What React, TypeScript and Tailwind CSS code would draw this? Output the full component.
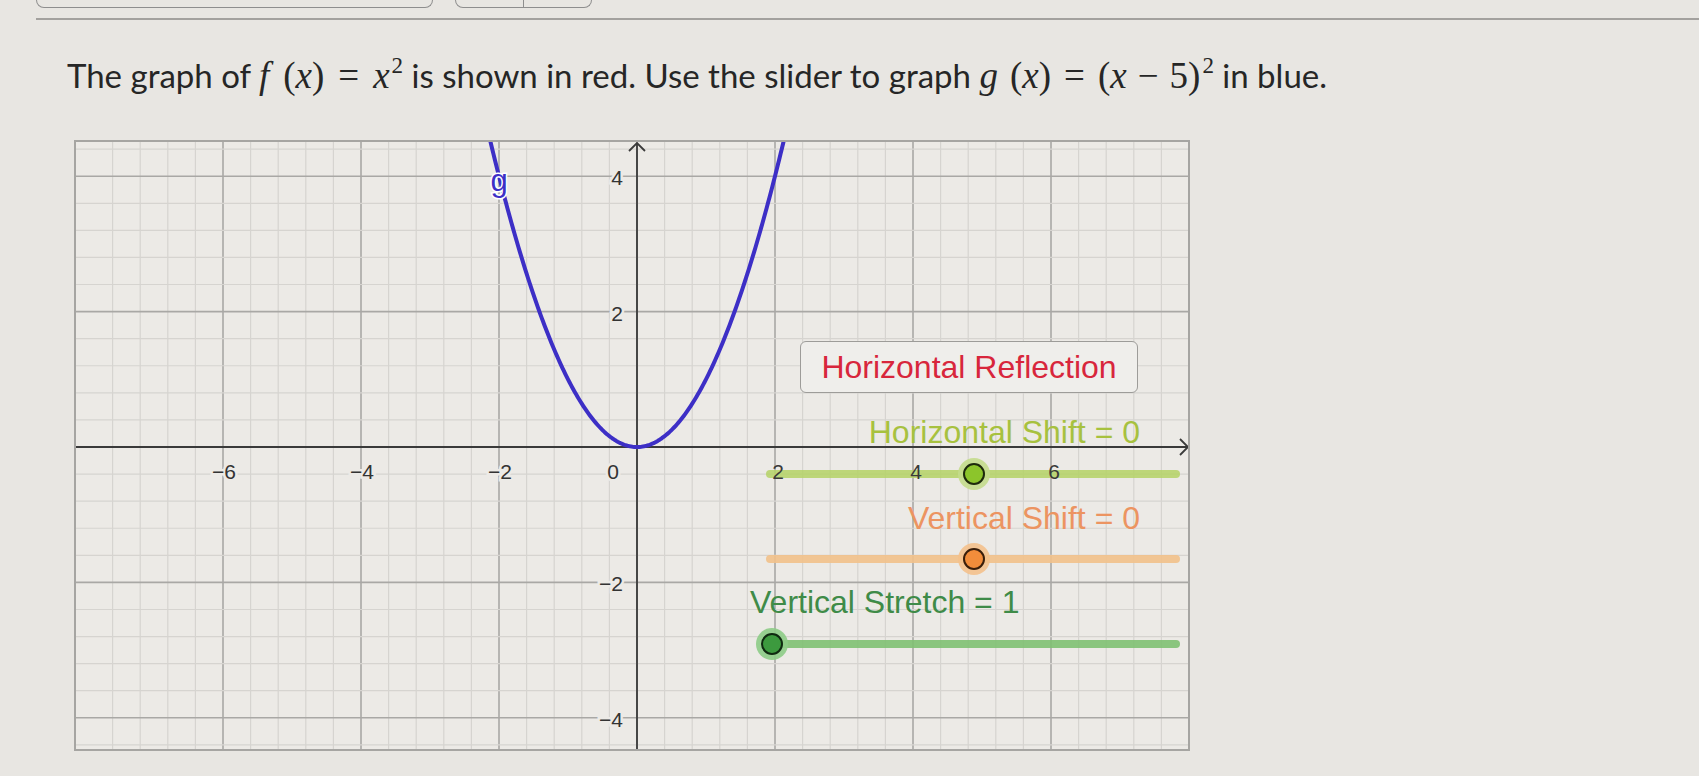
import React from "react";

const W = 1116;
const H = 611;
const X = (x: number) => 563 + 69 * x;
const Y = (y: number) => 307 - 67.7 * y;

const SANS = "'Liberation Sans', Arial, sans-serif";

function Graph() {
  const vlines: React.ReactNode[] = [];
  for (let i = -20; i <= 20; i++) {
    const major = i % 5 === 0;
    const x = X(i * 0.4);
    if (x < 14 || x > W - 4) continue;
    vlines.push(
      <line
        key={"v" + i}
        x1={x}
        y1={0}
        x2={x}
        y2={H}
        stroke={major ? "#a9a8a5" : "#d6d4d0"}
        strokeWidth={major ? 1.6 : 1.2}
      />
    );
  }
  const hlines: React.ReactNode[] = [];
  for (let i = -12; i <= 12; i++) {
    const major = i % 5 === 0;
    const y = Y(i * 0.4);
    if (y < 4 || y > H - 4) continue;
    hlines.push(
      <line
        key={"h" + i}
        x1={0}
        y1={y}
        x2={W}
        y2={y}
        stroke={major ? "#a9a8a5" : "#d6d4d0"}
        strokeWidth={major ? 1.6 : 1.2}
      />
    );
  }
  const pts: string[] = [];
  for (let k = 0; k <= 220; k++) {
    const x = -2.2 + (4.4 * k) / 220;
    pts.push(`${k === 0 ? "M" : "L"}${X(x).toFixed(2)},${Y(x * x).toFixed(2)}`);
  }
  const curve = pts.join(" ");
  const lab = {
    fontFamily: SANS,
    fontSize: 21,
    fill: "#333",
    stroke: "#eceae6",
    strokeWidth: 5,
    paintOrder: "stroke" as const,
  };
  const labPlain = { fontFamily: SANS, fontSize: 21, fill: "#3a3a3a" };
  const xlNeg = [-6, -4, -2];
  const xlPos = [2, 4, 6];
  const yl = [4, 2, -2, -4];
  return (
    <svg width={W} height={H} viewBox={`0 0 ${W} ${H}`} className="block">
      <defs>
        <clipPath id="gc">
          <rect x={0} y={0} width={W} height={H} />
        </clipPath>
      </defs>
      <rect x={0} y={0} width={W} height={H} fill="#eceae6" />
      {vlines}
      {hlines}
      {/* axes */}
      <line x1={0} y1={Y(0)} x2={W - 2} y2={Y(0)} stroke="#3a3a3a" strokeWidth={1.8} />
      <line x1={X(0)} y1={H} x2={X(0)} y2={3} stroke="#3a3a3a" strokeWidth={1.8} />
      <path d={`M${X(0) - 8},${11} L${X(0)},${3} L${X(0) + 8},${11}`} fill="none" stroke="#3a3a3a" strokeWidth={1.8} />
      <path d={`M${W - 10},${Y(0) - 8} L${W - 2},${Y(0)} L${W - 10},${Y(0) + 8}`} fill="none" stroke="#3a3a3a" strokeWidth={1.8} />
      {/* labels */}
      {xlNeg.map((v) => (
        <text key={"xl" + v} x={X(v) + 1} y={Y(0) + 32} textAnchor="middle" style={lab}>
          {"\u2212" + Math.abs(v)}
        </text>
      ))}
      <text x={X(0) - 24} y={Y(0) + 32} textAnchor="middle" style={lab}>
        0
      </text>
      {yl.map((v) => (
        <text key={"yl" + v} x={X(0) - 14} y={Y(v) + 9} textAnchor="end" style={lab}>
          {v < 0 ? "\u2212" + Math.abs(v) : String(v)}
        </text>
      ))}
      {/* curves */}
      <g clipPath="url(#gc)">
        <path d={curve} fill="none" stroke="#d63a3a" strokeWidth={2} />
        <path d={curve} fill="none" stroke="#3d2fc6" strokeWidth={4} strokeLinejoin="round" />
      </g>
      <text
        x={425}
        y={51}
        textAnchor="middle"
        style={{
          fontFamily: SANS,
          fontSize: 31,
          fill: "#3d2fc6",
          stroke: "#ffffff",
          strokeWidth: 3,
          paintOrder: "stroke",
        }}
      >
        g
      </text>
      {/* slider tracks */}
      <line x1={696} y1={334} x2={1102} y2={334} stroke="#b5d366" strokeWidth={8} strokeLinecap="round" opacity={0.85} />
      <line x1={696} y1={419} x2={1102} y2={419} stroke="#f2c28b" strokeWidth={8} strokeLinecap="round" opacity={0.9} />
      <line x1={696} y1={504} x2={1102} y2={504} stroke="#80c173" strokeWidth={8} strokeLinecap="round" opacity={0.9} />
      {xlPos.map((v) => (
        <text key={"xp" + v} x={X(v) + 3} y={Y(0) + 32} textAnchor="middle" style={labPlain}>
          {String(v)}
        </text>
      ))}
      <Knob x={900} y={334} halo="#c4dc8c" fill="#8cc52b" edge="#1e2a0c" />
      <Knob x={900} y={419} halo="#f4c18c" fill="#f28d3b" edge="#3a1e0a" />
      <Knob x={698} y={504} halo="#8dcc86" fill="#3c9a3e" edge="#0f2a10" />
      <text x={1066} y={303} textAnchor="end" style={{ fontFamily: SANS, fontSize: 32, fill: "#a7c13f" }}>
        Horizontal Shift = 0
      </text>
      <text x={1066} y={389} textAnchor="end" style={{ fontFamily: SANS, fontSize: 32, fill: "#ec9461" }}>
        Vertical Shift = 0
      </text>
      <text x={676} y={473} style={{ fontFamily: SANS, fontSize: 32, fill: "#3f8b48" }}>
        Vertical Stretch = 1
      </text>
      <rect x={1} y={1} width={W - 2} height={H - 2} fill="none" stroke="#a6a5a2" strokeWidth={2} />
    </svg>
  );
}

function Knob({ x, y, halo, fill, edge }: { x: number; y: number; halo: string; fill: string; edge: string }) {
  return (
    <g>
      <circle cx={x} cy={y} r={16} fill={halo} opacity={0.9} />
      <circle cx={x} cy={y} r={10} fill={fill} stroke={edge} strokeWidth={2} />
    </g>
  );
}

export default function App() {
  const math = "font-['Liberation_Serif',serif] text-[37px]";
  const sup = "relative -top-[15px] ml-[2px] text-[23px] not-italic";
  return (
    <div className="min-h-screen w-full overflow-hidden bg-[#e8e6e2] text-[#262626]">
      <div className="flex gap-[22px] pl-[36px]">
        <div className="h-[8px] w-[397px] rounded-b-[8px] border border-t-0 border-[#8e8e8e]" />
        <div className="flex h-[8px] w-[137px] rounded-b-[8px] border border-t-0 border-[#8e8e8e]">
          <div className="w-[68px] border-r border-[#8e8e8e]" />
        </div>
      </div>
      <div className="ml-[36px] mt-[10px] h-[2px] bg-[#a3a19e]" />
      <p className="ml-[67px] mt-[35px] h-[40px] whitespace-nowrap font-['Lato',sans-serif] text-[33px] leading-[40px]">
        The graph of{" "}
        <span className={math}>
          <i>f</i>
          <span className="ml-[14px]">(</span>
          <i>x</i>
          <span>)</span>
          <span className="mx-[14px]">=</span>
          <i>x</i>
          <span className={sup}>2</span>
        </span>{" "}
        is shown in red. Use the slider to graph{" "}
        <span className={math}>
          <i>g</i>
          <span className="ml-[12px]">(</span>
          <i>x</i>
          <span>)</span>
          <span className="mx-[13px]">=</span>
          <span>(</span>
          <i>x</i>
          <span className="mx-[11px]">{"\u2212"}</span>
          <span>5</span>
          <span>)</span>
          <span className={sup}>2</span>
        </span>{" "}
        in blue.
      </p>
      <div className="relative ml-[74px] mt-[45px] h-[611px] w-[1116px]">
        <Graph />
        <button className="absolute left-[726px] top-[201px] flex h-[52px] w-[338px] items-center justify-center rounded-[6px] border-[1.5px] border-[#9d9c99] bg-[#efeeeb] font-['Liberation_Sans',Arial,sans-serif] text-[32px] text-[#d8263c]">
          Horizontal Reflection
        </button>
      </div>
    </div>
  );
}
